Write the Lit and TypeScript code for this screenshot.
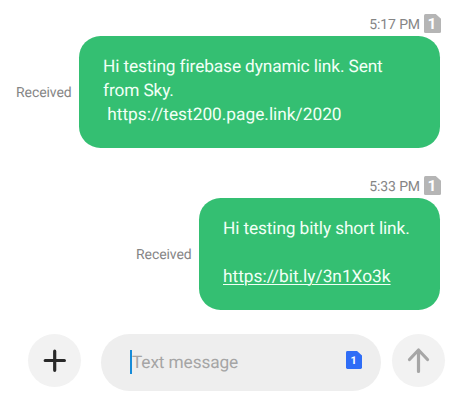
import { LitElement, html, css, svg } from "lit";
import { customElement, property } from "lit/decorators.js";

@customElement("sim-badge")
class SimBadge extends LitElement {
  @property({ type: Number }) digit = 15.5;
  static styles = css`
    :host { display: block; color: #b5b5b5; width: 17px; height: 19px; }
    svg { display: block; width: 100%; height: 100%; }
    text { font-family: Roboto, sans-serif; font-weight: 700; fill: #fff; }
  `;
  render() {
    return html`<svg viewBox="0 0 17 19">
      ${svg`<path fill="currentColor" d="M1.5 0H11.7L17 4.8V17.5Q17 19 15.5 19H1.5Q0 19 0 17.5V1.5Q0 0 1.5 0Z"/>
      <text x="8" y=${9.5 + this.digit * 0.36} font-size=${this.digit} text-anchor="middle">1</text>`}
    </svg>`;
  }
}

@customElement("chat-message")
class ChatMessage extends LitElement {
  @property() time = "";
  static styles = css`
    :host { display: flex; flex-direction: column; align-items: flex-end; text-rendering: geometricPrecision; }
    .meta { display: flex; align-items: flex-start; height: 22px; gap: 4px; color: #858585; font-size: 14px; }
    .time { line-height: 16px; padding-top: 3px; letter-spacing: -0.1px; }
    .row { display: flex; align-items: center; gap: 7px; }
    .status { color: #858585; font-size: 14px; line-height: 16px; padding-top: 1px; letter-spacing: -0.1px; }
    .bubble {
      box-sizing: border-box; height: 112px; border-radius: 21.5px; background: #34bf72; color: #f1fff6;
      padding: 20px 30px 0 24.5px; margin-right: 1px; font-size: 17.3px; line-height: 23.75px; white-space: pre;
    }
  `;
  render() {
    return html`
      <div class="meta"><span class="time">${this.time}</span><sim-badge></sim-badge></div>
      <div class="row"><span class="status">Received</span><div class="bubble"><slot></slot></div></div>
    `;
  }
}

@customElement("app-root")
class AppRoot extends LitElement {
  static styles = css`
    :host {
      display: flex; flex-direction: column; box-sizing: border-box; width: 474px; height: 412px;
      padding-top: 14px; background: #fff; font-family: Roboto, sans-serif; overflow: hidden;
      text-rendering: geometricPrecision;
    }
    .thread { display: flex; flex-direction: column; gap: 28px; padding-right: 33px; }
    .text { display: block; letter-spacing: -0.12px; }
    .one { width: 307px; }
    .two { width: 187px; }
    .url { letter-spacing: 0; }
    .link { text-decoration: underline; text-decoration-thickness: 1px; text-underline-offset: 2px; }
    .composer { display: flex; align-items: flex-start; padding: 23.5px 0 0 28px; }
    .round { width: 53px; height: 53px; border-radius: 50%; background: #f2f2f2; }
    .round svg { display: block; width: 53px; height: 53px; }
    .field {
      box-sizing: border-box; display: flex; align-items: center; width: 280px; height: 57px; border-radius: 28.5px;
      margin: 0 11px 0 20px; padding: 0 19px 0 29px; background: #eee;
    }
    .caret { width: 2px; height: 24px; background: #168bd8; }
    .hint { flex: 1; color: #a5a5a5; font-size: 17.3px; letter-spacing: -0.12px; padding-top: 2px; }
    .field sim-badge { color: #2f6df6; width: 16px; height: 18px; margin-bottom: 5px; }
  `;
  render() {
    return html`
      <div class="thread">
        <chat-message time="5:17 PM"><span class="text one">Hi testing firebase dynamic link. Sent
from Sky.
<span class="url"> https://test200.page.link/2020</span></span></chat-message>
        <chat-message time="5:33 PM"><span class="text two">Hi testing bitly short link.

<span class="url link">https://bit.ly/3n1Xo3k</span></span></chat-message>
      </div>
      <div class="composer">
        <div class="round"><svg viewBox="0 0 53 53"><path d="M26.7 17.2V36.3M17.2 26.5H36.4" fill="none" stroke="#292929" stroke-width="3.2" stroke-linecap="round"/></svg></div>
        <div class="field"><span class="caret"></span><span class="hint">Text message</span><sim-badge digit="11.5"></sim-badge></div>
        <div class="round"><svg viewBox="0 0 53 53"><path d="M26.5 37.5V16M17.5 25.5L26.5 16L35.5 25.5" fill="none" stroke="#a6a6a6" stroke-width="3.2" stroke-linecap="round" stroke-linejoin="round"/></svg></div>
      </div>
    `;
  }
}
